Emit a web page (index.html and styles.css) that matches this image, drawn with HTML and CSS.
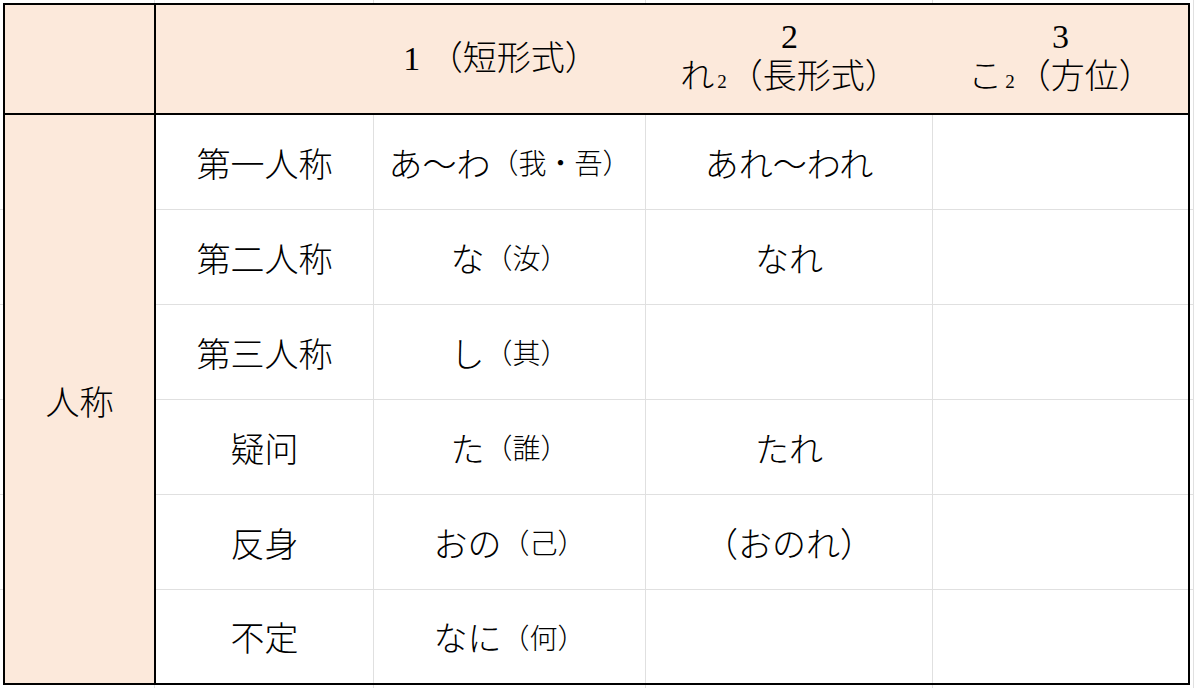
FILE: index.html
```html
<!DOCTYPE html>
<html lang="ja">
<head>
<meta charset="utf-8">
<title>人称</title>
<link rel="stylesheet" href="styles.css">
</head>
<body>
<div class="sheet">
  <div class="hd corner"></div>
  <div class="hd"></div>
  <div class="hd first">1 （短形式）</div>
  <div class="hd two"><span>2</span><span>れ<small class="sub">2</small>（長形式）</span></div>
  <div class="hd two"><span>3</span><span>こ<small class="sub">2</small>（方位）</span></div>

  <div class="side">人称</div>

  <div class="c">第一人称</div>
  <div class="c">あ～わ<span class="s">（我・吾）</span></div>
  <div class="c">あれ～われ</div>
  <div class="c end"></div>

  <div class="c">第二人称</div>
  <div class="c">な<span class="s">（汝）</span></div>
  <div class="c">なれ</div>
  <div class="c end"></div>

  <div class="c">第三人称</div>
  <div class="c">し<span class="s">（其）</span></div>
  <div class="c"></div>
  <div class="c end"></div>

  <div class="c">疑问</div>
  <div class="c">た<span class="s">（誰）</span></div>
  <div class="c">たれ</div>
  <div class="c end"></div>

  <div class="c">反身</div>
  <div class="c">おの<span class="s">（己）</span></div>
  <div class="c">（おのれ）</div>
  <div class="c end"></div>

  <div class="c last">不定</div>
  <div class="c last">なに<span class="s">（何）</span></div>
  <div class="c last"></div>
  <div class="c last end"></div>
</div>
</body>
</html>
```
FILE: styles.css
```css
html, body {
  margin: 0;
  padding: 0;
}
body {
  width: 1194px;
  height: 688px;
  overflow: hidden;
  background-color: #fff;
  background-image:
    linear-gradient(#e0e0e0, #e0e0e0),
    linear-gradient(#e0e0e0, #e0e0e0),
    linear-gradient(#e0e0e0, #e0e0e0),
    linear-gradient(#e0e0e0, #e0e0e0),
    linear-gradient(#e0e0e0, #e0e0e0),
    linear-gradient(#e0e0e0, #e0e0e0),
    linear-gradient(#e0e0e0, #e0e0e0),
    linear-gradient(#e0e0e0, #e0e0e0),
    linear-gradient(#e0e0e0, #e0e0e0),
    linear-gradient(#e0e0e0, #e0e0e0);
  background-size: 1px 100%, 1px 100%, 1px 100%, 1px 100%, 1px 100%,
    100% 1px, 100% 1px, 100% 1px, 100% 1px, 100% 1px;
  background-position: 154px 0, 373px 0, 645px 0, 932px 0, 1193px 0,
    0 209px, 0 304px, 0 399px, 0 494px, 0 589px;
  background-repeat: no-repeat;
  font-family: "Liberation Serif", "Noto Sans CJK JP", serif;
  font-weight: 300;
  color: #000;
  text-spacing-trim: space-all;
}
.sheet {
  box-sizing: border-box;
  margin: 3px 0 0 3px;
  width: 1187px;
  height: 682px;
  border: 2px solid #000;
  background: #fff;
  display: grid;
  grid-template-columns: 151px 218px 272px 287px 255px;
  grid-template-rows: 110px 95px 95px 95px 95px 95px 93px;
  font-size: 34px;
}
.hd {
  box-sizing: border-box;
  background: #fce9db;
  border-bottom: 2px solid #000;
  display: flex;
  align-items: center;
  justify-content: center;
  line-height: 40px;
  white-space: pre;
}
.corner {
  border-right: 2px solid #000;
}
.first {
  padding-right: 18px;
}
.two {
  flex-direction: column;
}
.two span {
  display: block;
}
.sub {
  font-size: 19px;
  margin: 0 2px 0 3px;
}
.side {
  grid-column: 1;
  grid-row: 2 / 8;
  box-sizing: border-box;
  background: #fce9db;
  border-right: 2px solid #000;
  display: flex;
  align-items: center;
  justify-content: center;
  padding-top: 2px;
}
.c {
  box-sizing: border-box;
  border-right: 1px solid #e0e0e0;
  border-bottom: 1px solid #e0e0e0;
  display: flex;
  align-items: center;
  justify-content: center;
  white-space: nowrap;
}
.c.end {
  border-right: 0;
}
.c.last {
  border-bottom: 0;
}
.s {
  font-size: 28px;
}
```
